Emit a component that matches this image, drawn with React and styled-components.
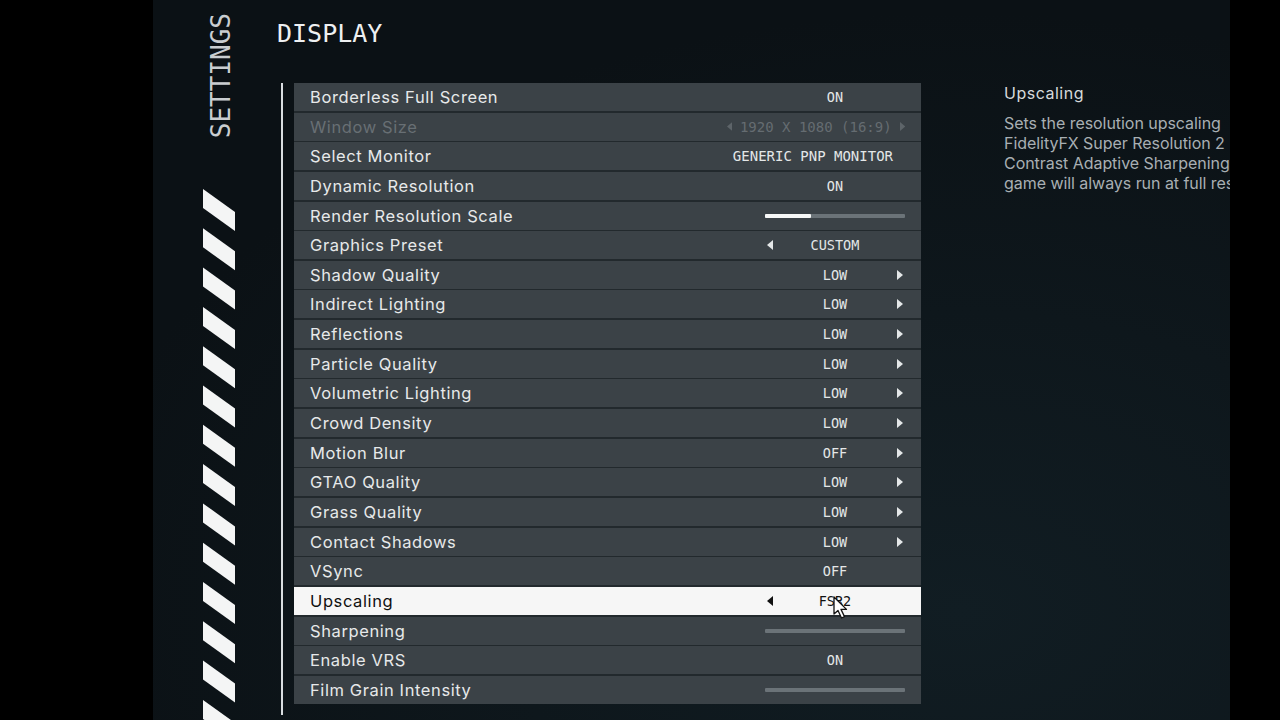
import styled, { createGlobalStyle } from "styled-components";

const GlobalStyle = createGlobalStyle`
    html, body {
        margin: 0;
        padding: 0;
        background: #000000;
    }
    body {
        font-family: Inter, "Noto Sans", sans-serif;
    }
`;

const opcoes = [
    { label: "Borderless Full Screen", tipo: "texto", valor: "ON" },
    { label: "Window Size", tipo: "largo", valor: "1920 X 1080 (16:9)", desativado: true },
    { label: "Select Monitor", tipo: "longo", valor: "GENERIC PNP MONITOR" },
    { label: "Dynamic Resolution", tipo: "texto", valor: "ON" },
    { label: "Render Resolution Scale", tipo: "slider", valor: 33 },
    { label: "Graphics Preset", tipo: "texto", valor: "CUSTOM", esquerda: true },
    { label: "Shadow Quality", tipo: "texto", valor: "LOW", direita: true },
    { label: "Indirect Lighting", tipo: "texto", valor: "LOW", direita: true },
    { label: "Reflections", tipo: "texto", valor: "LOW", direita: true },
    { label: "Particle Quality", tipo: "texto", valor: "LOW", direita: true },
    { label: "Volumetric Lighting", tipo: "texto", valor: "LOW", direita: true },
    { label: "Crowd Density", tipo: "texto", valor: "LOW", direita: true },
    { label: "Motion Blur", tipo: "texto", valor: "OFF", direita: true },
    { label: "GTAO Quality", tipo: "texto", valor: "LOW", direita: true },
    { label: "Grass Quality", tipo: "texto", valor: "LOW", direita: true },
    { label: "Contact Shadows", tipo: "texto", valor: "LOW", direita: true },
    { label: "VSync", tipo: "texto", valor: "OFF" },
    { label: "Upscaling", tipo: "texto", valor: "FSR2", esquerda: true, selecionada: true },
    { label: "Sharpening", tipo: "slider", valor: 0 },
    { label: "Enable VRS", tipo: "texto", valor: "ON" },
    { label: "Film Grain Intensity", tipo: "slider", valor: 0 },
];

const descricao = [
    "Sets the resolution upscaling",
    "FidelityFX Super Resolution 2",
    "Contrast Adaptive Sharpening",
    "game will always run at full res",
];

function Seta({ lado, cor, tamanho = 10 }) {
    const pontos = lado === "esquerda" ? "6,0 6,10 0,5" : "0,0 0,10 6,5";
    return (
        <svg width={tamanho * 0.6} height={tamanho} viewBox="0 0 6 10">
            <polygon points={pontos} fill={cor} />
        </svg>
    );
}

function Listras() {
    const faixas = [];
    for (let i = 0; i < 14; i++) {
        const y = i * 39.3;
        faixas.push(<polygon key={i} points={`0,${y} 0,${y + 19} 32,${y + 42} 32,${y + 23}`} fill="#f4f5f5" />);
    }
    return (
        <svg width="32" height="532" viewBox="0 0 32 532">
            {faixas}
        </svg>
    );
}

function Cursor() {
    return (
        <CursorBox>
            <svg width="18" height="24" viewBox="0 0 18 24">
                <path d="M1 1 L1 18 L5 14.5 L8.5 22 L11.5 20.6 L8 13.4 L13.5 13.4 Z" fill="#ffffff" stroke="#111111" strokeWidth="1.3" strokeLinejoin="round" />
            </svg>
        </CursorBox>
    );
}

function Controle({ opcao }) {
    const cor = opcao.selecionada ? "#111111" : "#e4e7e8";

    if (opcao.tipo === "slider") {
        return (
            <Area>
                <Trilho>
                    <Preenchido style={{ width: `${opcao.valor}%` }} />
                </Trilho>
            </Area>
        );
    }

    if (opcao.tipo === "largo") {
        return (
            <Area>
                <Largo desativado={opcao.desativado}>
                    <Seta lado="esquerda" cor="#5d6469" tamanho={9} />
                    <span>{opcao.valor}</span>
                    <Seta lado="direita" cor="#5d6469" tamanho={9} />
                </Largo>
            </Area>
        );
    }

    if (opcao.tipo === "longo") {
        return (
            <Area>
                <Longo>{opcao.valor}</Longo>
            </Area>
        );
    }

    return (
        <Area>
            <Lado>{opcao.esquerda && <Seta lado="esquerda" cor={cor} />}</Lado>
            <Valor selecionada={opcao.selecionada}>{opcao.valor}</Valor>
            <Lado>{opcao.direita && <Seta lado="direita" cor={cor} />}</Lado>
            {opcao.selecionada && <Cursor />}
        </Area>
    );
}

export default function App() {
    return (
        <>
            <GlobalStyle />
            <Tela>
                <Painel>
                    <Lateral>
                        <TituloVertical>SETTINGS</TituloVertical>
                        <ColunaListras>
                            <Listras />
                        </ColunaListras>
                    </Lateral>
                    <Principal>
                        <Titulo>DISPLAY</Titulo>
                        <Lista>
                            <Linhas>
                                {opcoes.map((opcao) => (
                                    <Linha key={opcao.label} selecionada={opcao.selecionada}>
                                        <Rotulo selecionada={opcao.selecionada} desativado={opcao.desativado}>
                                            {opcao.label}
                                        </Rotulo>
                                        <Controle opcao={opcao} />
                                    </Linha>
                                ))}
                            </Linhas>
                        </Lista>
                    </Principal>
                    <Info>
                        <InfoTitulo>Upscaling</InfoTitulo>
                        {descricao.map((linha) => (
                            <InfoLinha key={linha}>{linha}</InfoLinha>
                        ))}
                    </Info>
                </Painel>
            </Tela>
        </>
    );
}

const Tela = styled.div`
    width: 1280px;
    height: 720px;
    display: flex;
    background: #000000;
    overflow: hidden;
`;

const Painel = styled.div`
    margin-left: 153px;
    width: 1077px;
    height: 720px;
    display: flex;
    overflow: hidden;
    background:
        radial-gradient(ellipse 900px 600px at 75% 85%, #111d23 0%, rgba(17, 29, 35, 0) 100%),
        #0b1115;
`;

const Lateral = styled.div`
    width: 124px;
    flex-shrink: 0;
    display: flex;
    flex-direction: column;
    padding-left: 50px;
    box-sizing: border-box;
`;

const TituloVertical = styled.div`
    writing-mode: vertical-rl;
    transform: rotate(180deg);
    font-family: "DejaVu Sans Mono", "Liberation Mono", monospace;
    font-size: 26px;
    font-weight: 300;
    color: #c9cdd0;
    margin-top: 13px;
    margin-left: 5px;
    line-height: 26px;
    width: 26px;
`;

const ColunaListras = styled.div`
    margin-top: 51px;
    line-height: 0;
`;

const Principal = styled.div`
    width: 644px;
    flex-shrink: 0;
    display: flex;
    flex-direction: column;
`;

const Titulo = styled.h1`
    margin: 19px 0 0 0;
    font-family: "DejaVu Sans Mono", "Liberation Mono", monospace;
    font-size: 25px;
    font-weight: normal;
    color: #eef0f1;
    line-height: 30px;
`;

const Lista = styled.div`
    margin-top: 34px;
    margin-left: 4px;
    padding-left: 11px;
    border-left: 2px solid #d9dde0;
    height: 632px;
`;

const Linhas = styled.div`
    width: 627px;
    display: flex;
    flex-direction: column;
    gap: 1.65px;
    background: #22292d;
`;

const Linha = styled.div`
    height: 28px;
    display: flex;
    align-items: center;
    background: ${props => props.selecionada ? "#f6f6f6" : "#3b4247"};
`;

const Rotulo = styled.span`
    flex: 1;
    padding-left: 16px;
    font-family: Inter, "Noto Sans", sans-serif;
    font-size: 16.5px;
    letter-spacing: 0.6px;
    color: ${props => props.selecionada ? "#101010" : props.desativado ? "#686f74" : "#e7e9ea"};
`;

const Area = styled.div`
    position: relative;
    width: 160px;
    height: 28px;
    display: grid;
    grid-template-columns: 30px 100px 30px;
    align-items: center;
    padding-right: 6px;
    box-sizing: content-box;
`;

const Lado = styled.div`
    display: flex;
    justify-content: center;
    align-items: center;
`;

const Valor = styled.span`
    text-align: center;
    font-family: "DejaVu Sans Mono", "Liberation Mono", monospace;
    font-size: 13.5px;
    color: ${props => props.selecionada ? "#111111" : "#e4e7e8"};
`;

const Longo = styled.span`
    grid-column: 1 / -1;
    justify-self: end;
    margin-right: 22px;
    white-space: nowrap;
    font-family: "DejaVu Sans Mono", "Liberation Mono", monospace;
    font-size: 14px;
    color: #e4e7e8;
`;

const Largo = styled.span`
    grid-column: 1 / -1;
    justify-self: end;
    margin-right: 10px;
    display: flex;
    align-items: center;
    gap: 8px;
    white-space: nowrap;
    font-family: "DejaVu Sans Mono", "Liberation Mono", monospace;
    font-size: 14px;
    color: ${props => props.desativado ? "#656c71" : "#e4e7e8"};
`;

const Trilho = styled.div`
    grid-column: 1 / -1;
    margin: 0 10px 0 10px;
    height: 4px;
    background: #6b7378;
    border-radius: 1px;
`;

const Preenchido = styled.div`
    height: 100%;
    background: #f7f8f8;
    border-radius: 1px;
`;

const CursorBox = styled.div`
    position: absolute;
    left: 78px;
    top: 9px;
    line-height: 0;
    z-index: 2;
`;

const Info = styled.div`
    margin-left: 83px;
    padding-top: 83px;
    flex: 1;
    min-width: 0;
    overflow: hidden;
`;

const InfoTitulo = styled.div`
    font-family: Inter, "Noto Sans", sans-serif;
    font-size: 16px;
    letter-spacing: 0.5px;
    color: #d6dadc;
    line-height: 20px;
    margin-bottom: 10px;
`;

const InfoLinha = styled.div`
    font-family: Inter, "Noto Sans", sans-serif;
    font-size: 16px;
    letter-spacing: -0.05px;
    color: #a8afb3;
    line-height: 20px;
    white-space: nowrap;
`;
